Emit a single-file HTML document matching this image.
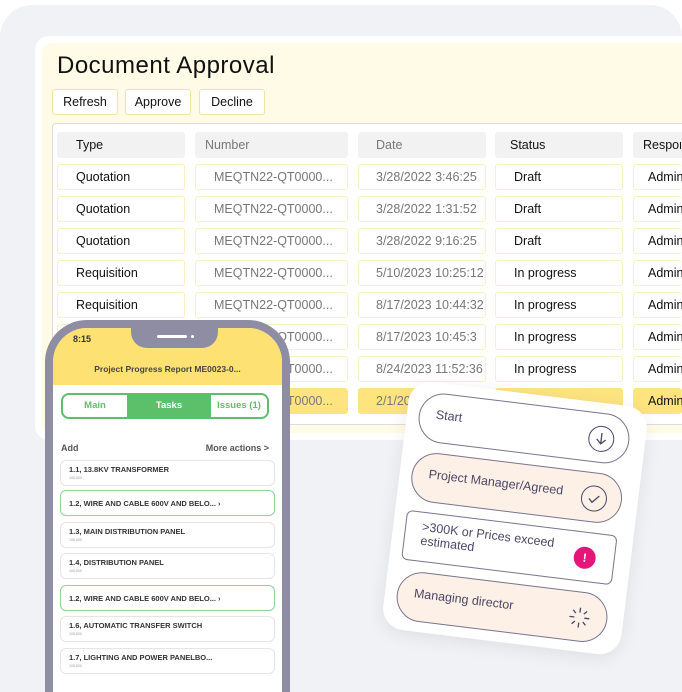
<!DOCTYPE html>
<html style="width:682px;height:692px;overflow:hidden"><head><meta charset="utf-8"><style>
*{box-sizing:border-box;margin:0;padding:0}
body{width:682px;height:692px;overflow:hidden;background:#fff;font-family:"Liberation Sans",sans-serif;position:relative}
.bg{position:absolute;left:0;top:5px;width:682px;height:687px;background:#f1f2f6;border-radius:32px 32px 0 0}
.card{position:absolute;left:35px;top:36px;width:647px;height:404px;background:#fff;border-radius:14px 0 0 14px}
.panel{position:absolute;left:42px;top:43px;width:640px;height:390px;background:#fffbe6;border-radius:10px 0 0 10px}
h1{position:absolute;left:57px;top:52px;font-size:24px;font-weight:normal;color:#111;letter-spacing:.5px}
.btn{position:absolute;top:89px;height:26px;background:#fff;border:1px solid #f5e3a0;border-radius:3px;font-size:12.5px;line-height:24px;text-align:center;color:#111}
.tbl{position:absolute;left:52px;top:123px;width:630px;height:302px;background:#fff;border:1px solid #ddd;border-right:none;border-radius:4px 0 0 4px}
.c{position:absolute;height:26px;border:1px solid #fbefc6;border-radius:3px;background:#fff;font-size:12.5px;line-height:24px;color:#111;white-space:nowrap;overflow:hidden}
.h{background:#f2f2f2;border-color:#f2f2f2}
.g{color:#777}
.y{background:#fde47f;border-color:#fde47f}
.phone{position:absolute;left:45px;top:320px;width:245px;height:372px;background:#8f8da3;border-radius:42px 42px 0 0}
.screen{position:absolute;left:53px;top:328px;width:229px;height:364px;background:#fff;border-radius:34px 34px 0 0;overflow:hidden}
.top{position:absolute;left:0;top:0;width:229px;height:57px;background:#fde172}
.notch{position:absolute;left:78px;top:-2px;width:87px;height:22px;background:#8f8da3;border-radius:0 0 16px 16px}
.tabs{position:absolute;left:8px;top:65px;width:208px;height:26px;border:2px solid #5cbf6a;border-radius:8px;overflow:hidden;display:flex;font-size:9.5px;font-weight:bold;color:#5cbf6a;line-height:22px;text-align:center}
.it{position:absolute;left:7px;width:215px;height:26px;border:1px solid #e5e5e5;border-radius:6px;font-size:7.5px;font-weight:bold;color:#333;padding:4px 0 0 8px}
.it small{display:block;font-size:3.5px;color:#999;font-weight:normal;margin-top:2px}
.it.gr{border-color:#8fd39a;padding-top:8px}
.fl{position:absolute;left:395px;top:393px;width:240px;height:250px;background:#fff;border-radius:22px;transform:rotate(7deg);box-shadow:0 4px 18px rgba(0,0,0,.08)}
.p{position:absolute;left:12px;width:212px;height:50px;border:1px solid #777490;border-radius:25px;font-size:12.5px;color:#4a4766;padding:14px 0 0 16px}
.ic{position:absolute;right:14px;top:12px;width:26px;height:26px;border:1.3px solid #4a4766;border-radius:50%}
</style></head><body>
<div class="bg"></div><div class="card"></div><div class="panel"></div>
<h1>Document Approval</h1>
<div class="btn" style="left:52px;width:66px">Refresh</div>
<div class="btn" style="left:125px;width:66px">Approve</div>
<div class="btn" style="left:199px;width:66px">Decline</div>
<div class="tbl"></div>
<div class="c h" style="left:57px;top:132px;width:128px;padding-left:18px">Type</div>
<div class="c h g" style="left:195px;top:132px;width:153px;padding-left:9px">Number</div>
<div class="c h g" style="left:358px;top:132px;width:128px;padding-left:17px">Date</div>
<div class="c h" style="left:495px;top:132px;width:128px;padding-left:14px">Status</div>
<div class="c h" style="left:633px;top:132px;width:49px;padding-left:9px;border-radius:3px 0 0 3px">Respor</div>
<div id="rows"></div>
<script>
var r=[["Quotation","3/28/2022 3:46:25","Draft"],["Quotation","3/28/2022 1:31:52","Draft"],["Quotation","3/28/2022 9:16:25","Draft"],["Requisition","5/10/2023 10:25:12","In progress"],["Requisition","8/17/2023 10:44:32","In progress"],["","8/17/2023 10:45:3","In progress"],["","8/24/2023 11:52:36","In progress"],["","2/1/2023","",1]];
var h="";r.forEach(function(x,i){var t=164+i*32,y=x[3]?" y":"";
h+='<div class="c'+y+'" style="left:57px;top:'+t+'px;width:128px;padding-left:18px">'+x[0]+'</div>';
h+='<div class="c g'+y+'" style="left:195px;top:'+t+'px;width:153px;padding-left:18px">MEQTN22-QT0000...</div>';
h+='<div class="c g'+y+'" style="left:358px;top:'+t+'px;width:128px;padding-left:17px">'+x[1]+'</div>';
h+='<div class="c'+y+'" style="left:495px;top:'+t+'px;width:128px;padding-left:18px">'+x[2]+'</div>';
h+='<div class="c'+y+'" style="left:633px;top:'+t+'px;width:49px;padding-left:14px;border-right:none">Admin</div>';});
document.getElementById("rows").innerHTML=h;
</script>
<div class="phone"></div>
<div class="screen">
<div class="top"></div>
<div class="notch"><div style="position:absolute;left:26px;top:9px;width:30px;height:3px;background:#fff;border-radius:2px"></div><div style="position:absolute;left:60px;top:9px;width:3px;height:3px;background:#fff;border-radius:50%"></div></div>
<div style="position:absolute;left:20px;top:6px;font-size:9px;font-weight:bold;color:#333">8:15</div>
<div style="position:absolute;left:0;width:229px;top:36px;text-align:center;font-size:8.5px;font-weight:bold;color:#444">Project Progress Report ME0023-0...</div>
<div class="tabs"><div style="width:64px">Main</div><div style="width:84px;background:#5cbf6a;color:#fff">Tasks</div><div style="flex:1">Issues (1)</div></div>
<div style="position:absolute;left:8px;top:115px;font-size:9px;font-weight:bold;color:#555">Add</div>
<div style="position:absolute;right:13px;top:115px;font-size:9px;font-weight:bold;color:#555">More actions &gt;</div>
<div class="it" style="top:132px">1.1, 13.8KV TRANSFORMER<small>100.000</small></div>
<div class="it gr" style="top:162px">1.2, WIRE AND CABLE 600V AND BELO... ›</div>
<div class="it" style="top:194px">1.3, MAIN DISTRIBUTION PANEL<small>100.000</small></div>
<div class="it" style="top:225px">1.4, DISTRIBUTION PANEL<small>100.000</small></div>
<div class="it gr" style="top:257px">1.2, WIRE AND CABLE 600V AND BELO... ›</div>
<div class="it" style="top:288px">1.6, AUTOMATIC TRANSFER SWITCH<small>100.000</small></div>
<div class="it" style="top:320px">1.7, LIGHTING AND POWER PANELBO...<small>100.000</small></div>
</div>
<div class="fl">
<div class="p" style="top:10px">Start<div class="ic"><svg width="24" height="24" viewBox="0 0 24 24"><path d="M12 6v11M7.5 12.5L12 17l4.5-4.5" fill="none" stroke="#4a4766" stroke-width="1.3"/></svg></div></div>
<div class="p" style="top:70px;background:#fdf0e6">Project Manager/Agreed<div class="ic"><svg width="24" height="24" viewBox="0 0 24 24"><path d="M7 12.5l3.5 3.5 6.5-7" fill="none" stroke="#4a4766" stroke-width="1.3"/></svg></div></div>
<div class="p" style="top:130px;border-radius:6px;padding-top:7px;line-height:14px">&gt;300K or Prices exceed<br>estimated<div style="position:absolute;right:18px;top:14px;width:22px;height:22px;border-radius:50%;background:#e5157a;color:#fff;font-size:12px;font-weight:bold;text-align:center;line-height:22px">!</div></div>
<div class="p" style="top:190px;background:#fdf0e6">Managing director<div style="position:absolute;right:14px;top:12px;width:26px;height:26px"><svg width="26" height="26" viewBox="0 0 26 26" stroke="#4a4766" stroke-width="1.3"><path d="M13 3v5M13 18v5M3 13h5M18 13h5M6 6l3 3M17 17l3 3M20 6l-3 3M9 17l-3 3"/></svg></div></div>
</div>
</body></html>
